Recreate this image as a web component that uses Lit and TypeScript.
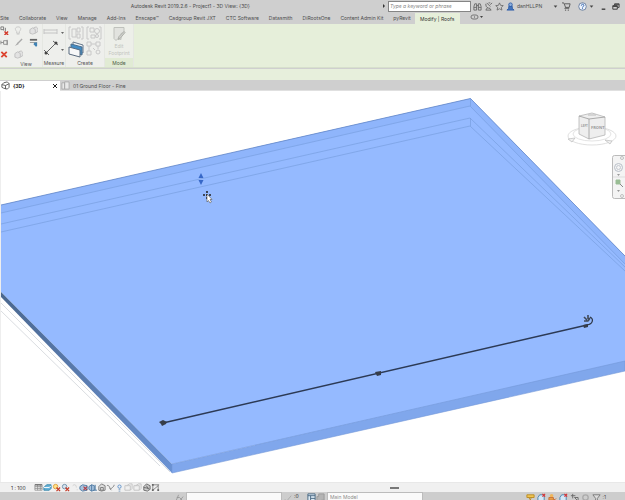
import { LitElement, html, css, svg } from "lit";
import { customElement } from "lit/decorators.js";

const icons: Record<string, unknown> = {
  cutRed: svg`<path d="M1 1h3v4M1 1v3h3M6 2v4" stroke="#777"/><path d="M5 6l4 4M9 6l-4 4" stroke="#d33a2c" stroke-width="1.6"/>`,
  pin: svg`<path d="M1 3v4M1 5h3M4 3v4h4V3zM8 2v6" stroke="#8a8a8a"/>`,
  redX: svg`<path d="M1.500 2l6 6M7.500 2l-6 6" stroke="#dc4430" stroke-width="2"/>`,
  bulb: svg`<path d="M3 6C0 3 2 1 4.500 1S9 3 6 6v2H3zM3 9h3" stroke="#c6c6c6"/>`,
  brush: svg`<path d="M9 1L4 6" stroke="#aaa" stroke-width="1.500"/><path d="M4 5L1 9l4-2z" fill="#aaa"/>`,
  boxes: svg`<path d="M1 4l3-2 3 2v4L4 9 1 8zM5 2l3-1 2 2v3L7 8" stroke="#c0c0c0" fill="#e2e2e2"/>`,
  lineweight: svg`<path d="M1 2h8" stroke="#666" stroke-width="2"/><path d="M1 5h8" stroke="#999"/><path d="M6 5h3v3l-1 2-3-3z" fill="#3f82b4"/>`,
  person: svg`<circle cx="5" cy="3" r="2" fill="#8fb0dd" stroke="#315fa8"/><path d="M3 5v2L1 9h8L7 7V5z" fill="#4274bd" stroke="#315fa8"/>`,
  star: svg`<path d="M5 1l1.200 2.700 3 .3-2.200 2 .7 3L5 7.500 2.300 9 3 6 .8 4l3-.3z" stroke="#666" stroke-width=".9"/>`,
  binoculars: svg`<path d="M1 9V5l1-3h2v7zM9 9V5L8 2H6v7zM4 4h2M1 6h3M6 6h3" stroke="#666"/>`,
  satellite: svg`<path d="M2 2c0 4 2 5 5 5M3 1l4 4M7 1H5M7 3l2-2M4 6L2 9h6L6 7" stroke="#666"/>`,
  cart: svg`<path d="M0 1h2l2 5h4l1-4H3M4 6l-1 1h5" stroke="#555"/><circle cx="4" cy="9" r=".8" fill="#555"/><circle cx="7" cy="9" r=".8" fill="#555"/>`,
  help: svg`<circle cx="5" cy="5" r="4.200" fill="#eef3fb" stroke="#5a7296" stroke-width=".9"/><path d="M3.700 4C3.700 2 6.500 2 6.500 3.800 6.500 5 5 5 5 6.200M5 7v1" stroke="#2d61ad" stroke-width="1.100"/>`,
  minimise: svg`<path d="M3 8h4" stroke="#444" stroke-width="1.600"/>`,
  restore: svg`<path d="M4 4V2h5v4H7M2 4h5v4H2zM2 5h5M4 3h5" stroke="#444" stroke-width="1.100"/>`,
  arrow: svg`<path d="M3 4h4L5 6.500z" fill="#444"/>`,
  cube: svg`<path d="M1 4l2-2 4-1 2 2v4L7 9 3 8 1 7zM1 4l4 1 4-2M5 5v4" stroke="#555"/>`,
  sheet: svg`<path d="M1 2h3v7H1zM4 1h5v8H4z" stroke="#aaa" fill="#e8e8e8"/>`,
  grid: svg`<path d="M1 2h8v6H1zM1 4h8M1 6h8M4 2v6M7 2v6" stroke="#888" stroke-width=".8" fill="#eee"/><path d="M1 2h8" stroke="#555"/>`,
  blueBox: svg`<path d="M1 5l3-3h5v4L7 8H1z" fill="#69b4d9" stroke="#3383a8"/><path d="M1 5h6l2-2" stroke="#fff"/>`,
  sunOff: svg`<circle cx="4" cy="4" r="2.500" fill="#ffe18a" stroke="#dea03a"/><path d="M5 5l4 4M9 5L5 9" stroke="#c43d2b" stroke-width="1.400"/>`,
  shadowOff: svg`<circle cx="4" cy="4" r="2.500" fill="#d6e4ee" stroke="#6d8eaa"/><path d="M5 5l4 4M9 5L5 9" stroke="#c43d2b" stroke-width="1.400"/>`,
  crop: svg`<path d="M1 4l3-2 5 1v5L4 9 1 7z" fill="#a9c3dd" stroke="#4d79a3"/><path d="M5 4l4 4M9 4L5 8" stroke="#b23a42" stroke-width="1.200"/>`,
  cropBlue: svg`<path d="M1 4l3-2 3 1v5L4 9 1 7zM4 2v7M8 2v6M6 8h4" fill="#a9c3dd" stroke="#4d79a3"/>`,
  lock: svg`<path d="M2 4l3-3 4 2v5L5 9 2 8zM4 5h3v3H4z" stroke="#777" fill="#ddd"/>`,
  glasses: svg`<path d="M1 3c3-2 3 5 5 3s3-2 3-4M4 6l2 2" stroke="#777"/>`,
  drop: svg`<circle cx="5" cy="4" r="1.800" stroke="#5a8fca"/><path d="M4 7h2M4 9h2" stroke="#7699bd"/>`,
  faint: svg`<path d="M1 3h6v5H1zM3 3l3-2h3v5L7 8" stroke="#c3c3c3"/>`,
  fainter: svg`<path d="M3 3c2-2 4-1 4 2M8 7v1" stroke="#ccc"/>`,
  gear: svg`<path d="M2 4l3-3 4 2v4L6 9 2 8zM5 3l2 4M2 5l6 1" stroke="#666" fill="#ccc"/>`,
  links: svg`<path d="M2 2h7M2 2v6M8 2v6M2 8l6-5" stroke="#666" stroke-width=".8"/><path d="M1 7h2v2H1zM7 7h2v2H7zM1 1h2v2H1z" fill="#666"/>`,
  options: svg`<path d="M1 1h8v8H1zM1 3h8M4 3v6M4 6h5" stroke="#456580" fill="#dceaf3"/>`,
  pages: svg`<path d="M3 1h6v7H6v2H1V4h2z" fill="#b4b4b4" stroke="#999"/>`,
  yellow: svg`<path d="M1 2h8v3H1zM3 5l3 4M6 5L4 9" stroke="#b98a22" fill="#f0c552"/>`,
  redBlue: svg`<path d="M3 2h5v7H1V5z" fill="#d4e8f7" stroke="#4681ad"/><path d="M6 1l3 3M9 1L6 4" stroke="#d33" stroke-width="1.300"/>`,
  orange: svg`<circle cx="4" cy="3" r="2" fill="#efb55b"/><path d="M1 5h5v3H1zM6 6l3 3M9 6L6 9" fill="#e6a04a" stroke="#c96f32"/>`,
  move: svg`<path d="M1 3h5M3 1v5M5 5h4v4M5 5l4 4" stroke="#666"/>`,
  ring: svg`<circle cx="5" cy="5" r="3" stroke="#aaa" stroke-width="1.500"/>`,
  filter: svg`<path d="M1 2h8L6 6v3H4V6z" stroke="#777" fill="#ddd"/>`,
  slash: svg`<path d="M1 7l2 2 5-6" stroke="#aaa"/>`,
  fx: svg`<path d="M1 9l3-7M2 5h3M5 5l4 4M9 4L5 9" stroke="#999"/>`,
};

const icon = (name: string) =>
  html`<svg class="icon" viewBox="0 0 10 10" fill="none" aria-hidden="true">${icons[name]}</svg>`;
const tool = (name: string) =>
  html`<button class="tool" aria-label=${name}>${icon(name)}</button>`;

@customElement("revit-ribbon")
class RevitRibbon extends LitElement {
  static styles = css`
    :host { display: flex; height: 44px; background: #e6efda; border-bottom: 1px solid #d7e0cc; color: #555; font: 5px/8px Inter, sans-serif; }
    button { border: 0; padding: 0; background: none; color: inherit; font: inherit; display: block; }
    .panel { display: flex; flex-direction: column; align-items: center; justify-content: space-between; background: #eeefec; box-sizing: border-box; border-right: 1px solid #e5e7e2; }
    .view { width: 43px; }
    .measure { width: 23px; }
    .create { width: 39px; }
    .mode { width: 29px; color: #4f5b45; background: linear-gradient(#edefe9 0 34px, #e1ebd4 34px); }
    .view .body { display: grid; width: 100%; grid-template-columns: 14px 15px 14px; grid-auto-rows: 12px; align-items: center; }
    .view span { padding-left: 10px; }
    .icon { display: block; width: 9px; height: 9px; }
    .wide { display: block; width: 23px; height: 34px; }
    .large { display: block; width: 36px; height: 34px; }
    .footprint { color: #c2c4be; text-align: center; line-height: 7px; }
    .footprint svg { display: block; margin: 0 auto; width: 16px; height: 19px; }
  `;
  render() {
    return html`
      <section class="panel view">
        <div class="body">
          ${["cutRed", "bulb", "boxes", "pin", "brush", "lineweight", "redX", "boxes"].map(tool)}
        </div>
        <span>View</span>
      </section>
      <section class="panel measure">
        <button aria-label="Measure tools"><svg class="wide" viewBox="0 0 23 34" fill="none">
          <path d="M1 5v5M14 5v5M1 6h13M1 9h13" stroke="#c4c4c4"/><path d="M3 29L13 19M1 26l5 5M10 17l5 4" stroke="#666"/>
          <circle cx="3" cy="29" r="1.500" fill="#444"/><circle cx="13" cy="19" r="1.500" fill="#444"/>
          <path d="M18 8h3l-1.500 2zM18 25h3l-1.500 2z" fill="#666"/></svg></button>
        <span>Measure</span>
      </section>
      <section class="panel create">
        <button aria-label="Create tools"><svg class="large" viewBox="0 0 36 34" fill="none">
          <g stroke="#c8c8c8"><path d="M4 3H2v12h2M14 3h2v12h-2M5 5h4v8H5zM10 4h3v4h-3zM10 10h3v4h-3zM22 3h-2v12h2M32 3h2v12h-2M23 4h4v4h-4zM24 11h4v3h-4z"/><circle cx="30" cy="7" r="2.500"/><circle cx="30" cy="12" r="1.500"/>
          <path d="M20 18h4v4h-4zM29 18h4v4h-4zM20 27h4v4h-4zM24 20h5M22 22v5M31 22v3M26 24l2 2"/><circle cx="31" cy="28" r="2"/></g>
          <path d="M6 18l10 3v8L6 26z" fill="#eef3f7" stroke="#68798b"/><path d="M4 20l11 3v8L4 28z" fill="#438dc5" stroke="#4d6e8d"/><path d="M2 23l11 3v7L2 30z" fill="#f6f7f8" stroke="#596a7e"/></svg></button>
        <span>Create</span>
      </section>
      <section class="panel mode">
        <button class="footprint"><svg viewBox="0 0 16 18" fill="none"><path d="M3 3h10v5l-3 1v6L7 14l-2 2-2-2z" stroke="#bfc1bc" fill="#e2e3df"/><path d="M14 8l-5 6-2 1 1-3 5-5z" fill="#d0d1cd" stroke="#aeb0aa"/></svg>Edit<br>Footprint</button>
        <span>Mode</span>
      </section>`;
  }
}

@customElement("model-scene")
class ModelScene extends LitElement {
  static styles = css`
    :host { display: block; min-height: 0; overflow: hidden; background: #fff; }
    svg { display: block; width: 100%; height: 100%; }
    .face { font: bold 4px "Open Sans", sans-serif; fill: #999; }
    .left { font-size: 3px; }
  `;
  render() {
    return html`<svg viewBox="0 91 625 391" preserveAspectRatio="xMidYMin slice" fill="none" role="img" aria-label="3D roof">
      <defs><linearGradient id="edge" x1="0" y1="0" x2="1" y2="1"><stop stop-color="#4a678f"/><stop offset="1" stop-color="#6a92d4"/></linearGradient></defs>
      <path d="M470.500 98.500L625 256V362L172 464 1 292V205z" fill="#95baff"/>
      <path d="M470.500 98.500L625 256v8L470 106 1 213v-8z" fill="#8fb5fb"/>
      <path d="M1 292L172 464v9L1 297z" fill="url(#edge)"/>
      <path d="M172 464L625 361v10L172 473z" fill="#80a7ec" stroke="#7398d8" stroke-width=".6"/>
      <path d="M1 205L470.500 98.500 625 256" stroke="#6488c6" stroke-width=".8"/>
      <path d="M1 213L470 106 625 264M1 224L470 118 625 267M1 232L470 126 625 271M470.500 98v8M470.500 118v8" stroke="#789fe0" stroke-width=".7"/>
      <path d="M0 302L170 472M0 310L160 466" stroke="#b4bac2" stroke-width=".5"/>
      <path d="M.5 91v391" stroke="#eee"/>
      <path d="M163 423L587 325" stroke="#2c3a55" stroke-width="1.400"/>
      <path d="M159 422l4-2 4 2-1 2-4 2-1-2zM375 372l6-1v4l-4 1zM583 325l5-1v3l-4 1z" fill="#363d49"/>
      <path d="M584 317l3 3M588 315v4M584 321h4M590 318l-2 3" stroke="#404957" stroke-width="1.600"/><path d="M590 317c4 2 3 7-3 8" stroke="#2c3543" stroke-width="1.200"/>
      <path d="M198.500 178h5l-2.500-5zM198.500 180h5l-2.500 5z" fill="#3768c8"/>
      <path d="M203 195h8M207 191v8" stroke="#222" stroke-dasharray="2 1" stroke-width="1.500"/><path d="M207 194v8l1.500-1.500 1.500 2.500 1.500-1-1.500-2.500h2z" fill="#fff" stroke="#555" stroke-width=".6"/>
      <ellipse cx="592" cy="136" rx="24" ry="9" stroke="#e0e0e0"/><ellipse cx="592" cy="134" rx="19" ry="7" stroke="#e4e4e4"/>
      <path d="M568 139l7-1-3 4zM605 140l7 1-2 3z" fill="#f1f1f1" stroke="#bbb" stroke-width=".7"/>
      <path d="M579 116l13-3 13 4v18l-16 4-10-5z" fill="#eee" stroke="#b5b5b5" stroke-width=".8"/><path d="M579 116l10 3 16-2M589 119v20" stroke="#999" stroke-width=".8"/>
      <text class="face left" x="581" y="127">LEFT</text><text class="face" x="591" y="129">FRONT</text><path d="M588 115h8" stroke="#bbb"/>
      <rect x="612.500" y="155.500" width="15" height="43" rx="2" fill="#f4f4f4" stroke="#bbb"/>
      <circle cx="622" cy="158" r="1.500" stroke="#aaa" stroke-width=".7"/><circle cx="618.500" cy="167.500" r="4" stroke="#b9bfc8"/><circle cx="618.500" cy="167.500" r="2" stroke="#c4c9d0"/>
      <path d="M613 177h12" stroke="#ddd"/><path d="M617 174h3l-1.500 2zM617 190h3l-1.500 2z" fill="#999"/><path d="M616 180h4v4h-4zM618 180v4M616 182h4" fill="#c7ddc2" stroke="#79a873" stroke-width=".7"/><path d="M620 184l3 3" stroke="#888"/><circle cx="622" cy="196" r="1.500" stroke="#aaa" stroke-width=".7"/>
    </svg>`;
  }
}

@customElement("app-root")
class AppRoot extends LitElement {
  static styles = css`
    * { box-sizing: border-box; }
    :host { display: grid; grid-template-rows: 12px 12px 45px 11px 11px minmax(0, 1fr) 10px 8px; grid-template-columns: minmax(0, 1fr); height: 100vh; overflow: hidden; background: #cfcfcf; color: #4d4d4d; font: 5px/8px Inter, sans-serif; white-space: nowrap; }
    button { display: block; border: 0; padding: 0; margin: 0; background: none; color: inherit; font: inherit; }
    .icon { display: block; width: 9px; height: 9px; }
    .title { display: grid; grid-template-columns: 1fr 238px; }
    .name { display: flex; justify-content: flex-end; align-items: center; gap: 132px; }
    .pointer { width: 5px; height: 6px; fill: #333; }
    .account { display: flex; align-items: center; gap: 2px; padding-left: 1px; }
    input { width: 83px; height: 11px; border: 1px solid #858585; background: #fff; padding: 0 1px; margin: 0; font: italic 5px/8px Inter, sans-serif; }
    input::placeholder { color: #858585; opacity: 1; }
    .user { width: 32px; text-align: left; }
    .window { display: flex; gap: 3px; margin-left: auto; padding-right: 5px; }
    .help { display: flex; margin-left: 5px; }
    .tabs { display: flex; align-items: stretch; gap: 10px; overflow: hidden; }
    .tabs button { flex: none; }
    .tabs .current { background: #e6efda; width: 45px; margin: 1px 0 0 -6px; color: #333; }
    .toggle { width: 14px; }
    .options { background: #e7efdc; }
    .documents { display: flex; align-items: center; border-bottom: 1px solid #e0e0e0; padding-top: 1px; }
    .document { display: flex; align-items: center; height: 10px; gap: 3px; padding-left: 1px; }
    .active { width: 60px; background: #fff; color: #222; font-weight: bold; }
    .close { margin-left: auto; padding-right: 2px; }
    .close svg { display: block; width: 6px; height: 6px; stroke: #222; stroke-width: 1; }
    .controls { display: flex; align-items: center; background: #f0f0f0; border-top: 1px solid #e8e8e8; }
    .scale { width: 34px; padding-left: 11px; color: #333; text-align: left; }
    .set { display: flex; }
    .handle { width: 9px; height: 2px; background: #777; margin-left: auto; margin-right: 226px; }
    .status { display: flex; overflow: hidden; align-items: flex-start; background: #cdcdcd; padding-left: 175px; }
    .status > * { flex: none; }
    .status > .tool, .filters { margin-top: 1px; }
    select { appearance: none; border: 1px solid #bcbcbc; border-radius: 0; width: 96px; height: 10px; background: #fafafa; color: #8d8d8d; font: 5px/8px Inter, sans-serif; padding: 0 2px; margin: 0 2px; }
    .count { width: 14px; padding-left: 1px; color: #333; }
    .filters { display: flex; gap: 2px; margin-left: auto; padding-right: 19px; }
  `;
  render() {
    const tabs = ["Site", "Collaborate", "View", "Manage", "Add-Ins", "Enscape™", "Cadgroup Revit JXT", "CTC Software", "Datasmith", "DiRootsOne", "Content Admin Kit", "pyRevit"];
    return html`
      <header class="title">
        <div class="name"><span>Autodesk Revit 2019.2.6 - Project1 - 3D View: {3D}</span><svg class="pointer" viewBox="0 0 5 6"><path d="M1 1l2 2-2 2z"/></svg></div>
        <div class="account">
          <input aria-label="Search" placeholder="Type a keyword or phrase">
          ${["binoculars", "satellite", "star", "person"].map(tool)}
          <button class="user">danHLLPN</button>
          ${tool("arrow")}${tool("cart")}
          <div class="help">${tool("help")}${tool("arrow")}</div>
          <div class="window">${tool("minimise")}${tool("restore")}</div>
        </div>
      </header>
      <nav class="tabs">
        ${tabs.map((t) => html`<button>${t}</button>`)}
        <button class="current">Modify | Roofs</button>
        <button aria-label="Ribbon display"><svg class="toggle" viewBox="0 0 14 8" fill="none"><rect x="1" y="2" width="7" height="4" rx="2" stroke="#777"/><path d="M4 4h1" stroke="#555"/><path d="M10 3h3l-1.500 2z" fill="#444"/></svg></button>
      </nav>
      <revit-ribbon></revit-ribbon>
      <div class="options"></div>
      <nav class="documents">
        <div class="document active">${icon("cube")}<span>{3D}</span><button class="close" aria-label="Close"><svg viewBox="0 0 6 6"><path d="M1 1l4 4M5 1L1 5"/></svg></button></div>
        <button class="document">${icon("sheet")}<span>01 Ground Floor - Fine</span></button>
      </nav>
      <model-scene></model-scene>
      <div class="controls">
        <button class="scale">1 : 100</button>
        <div class="set">${["grid", "blueBox", "sunOff", "shadowOff", "fainter", "crop", "cropBlue", "lock", "glasses", "drop", "faint", "faint", "gear", "links"].map(tool)}</div>
        <div class="handle"></div>
      </div>
      <footer class="status">
        ${tool("fx")}
        <select aria-label="Workset"><option></option></select>
        ${tool("slash")}<span class="count">:0</span>
        ${tool("options")}${tool("pages")}
        <select aria-label="Design option"><option>Main Model</option></select>
        <div class="filters">${["yellow", "redBlue", "orange", "redBlue", "move", "ring", "filter"].map(tool)}<span>:1</span></div>
      </footer>`;
  }
}
